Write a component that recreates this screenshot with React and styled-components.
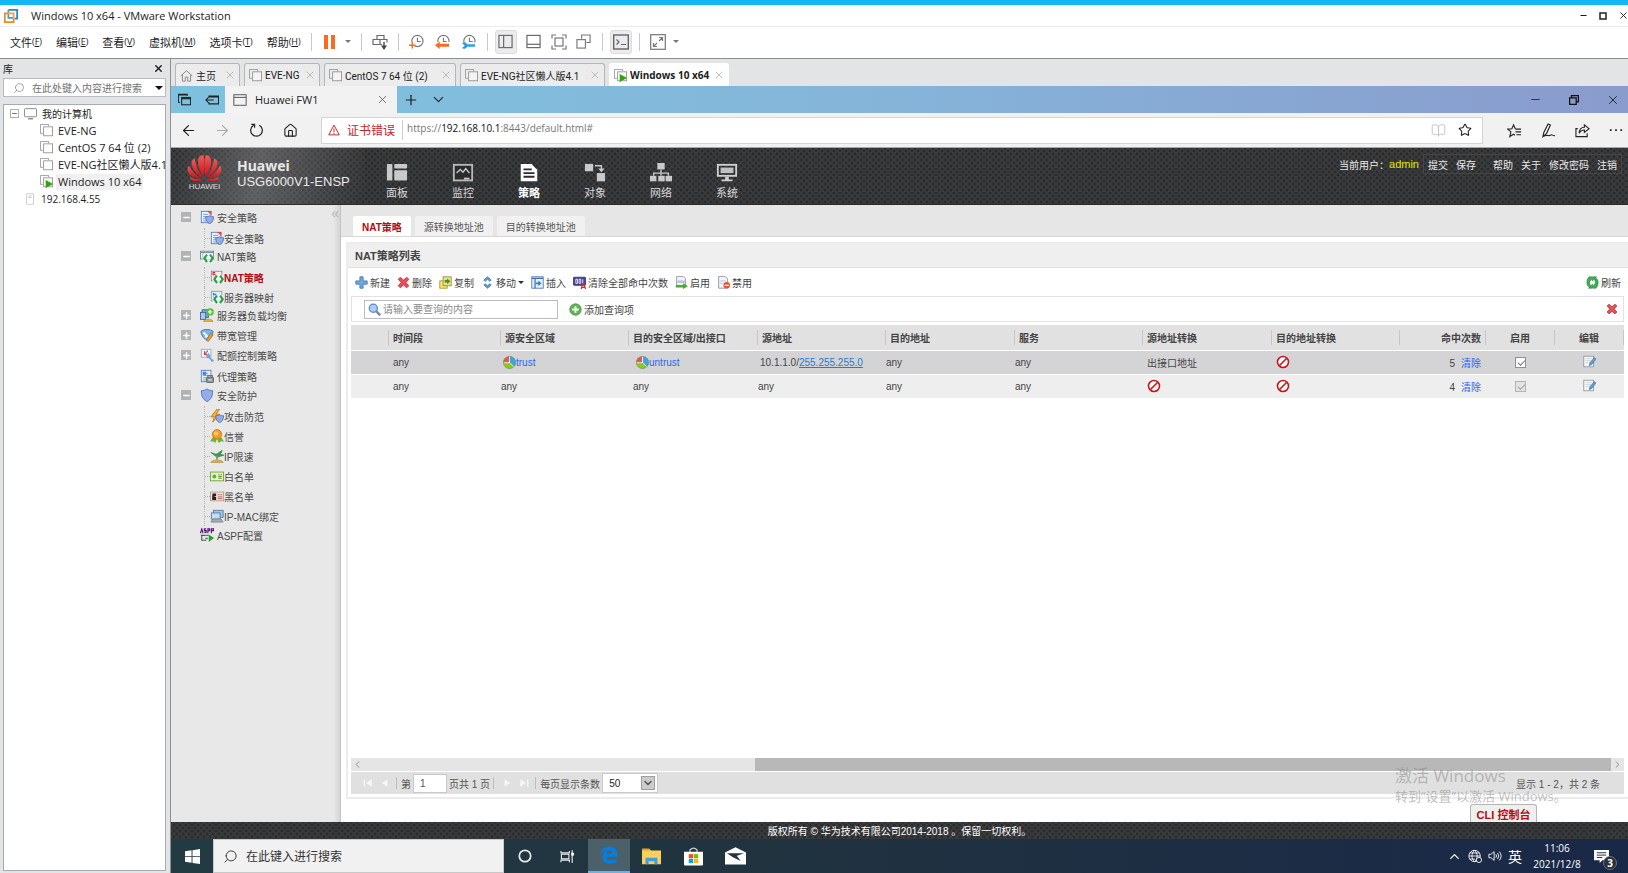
// Main packages
import React from "react";
import styled, { createGlobalStyle, css } from "styled-components";
// Icons
import { ArrowLeft, ArrowRight, BookOpen, ChevronDown, ChevronLeft, ChevronRight, ChevronUp, Home, Minus, Plus, Search, Star, X } from "lucide-react";

const GlobalStyle = createGlobalStyle`
  :root {
    --ui: "Open Sans", "Noto Sans CJK SC", sans-serif;
    --page: "Liberation Sans", "Noto Sans CJK SC", sans-serif;
    --red: #b50a0f;
    --link: #2a66f0;
    --chrome: #e3e4e6;
  }
  * {
    box-sizing: border-box;
  }
  body {
    margin: 0;
    font-family: var(--ui);
    font-size: 10px;
    color: #1c1c1c;
  }
  button, input, select {
    font: inherit;
    color: inherit;
    margin: 0;
  }
  button {
    padding: 0;
    border: 0;
    background: none;
    display: inline-flex;
    align-items: center;
    justify-content: center;
    white-space: nowrap;
  }
  a {
    color: inherit;
    text-decoration: none;
  }
  svg {
    flex: none;
    display: block;
  }
`;

const carbon = css`
  background-color: #3b3c3e;
  background-image: radial-gradient(#2a2b2d 1px, transparent 2px),
    radial-gradient(#2a2b2d 1px, transparent 2px);
  background-size: 6px 6px;
  background-position: 0 0, 3px 3px;
`;

/* Small drawings */

const Icon = ({ size = 13, box = 16, children, ...rest }) => (
  <svg width={size} height={size} viewBox={`0 0 ${box} ${box}`} fill="none" aria-hidden="true" {...rest}>
    {children}
  </svg>
);

const VmwareLogo = () => (
  <Icon size={14}>
    <path d="M5 1h10v10h-3" stroke="#1b8fc4" strokeWidth="2" />
    <path d="M5 1v9h6" stroke="#35a3d6" strokeWidth="2" />
    <path d="M5 5H1v10h10v-4" stroke="#f08a1d" strokeWidth="2" />
    <path d="M4 5h7v6" stroke="#f7a13a" strokeWidth="2" />
  </Icon>
);

const VmIcon = ({ running }) => (
  <Icon size={13}>
    <path d="M3.500 11.500h-3v-11h10v2" stroke="#8b8b8b" />
    <rect x="4.500" y="3.500" width="11" height="11" stroke="#8b8b8b" fill="#fff" fillOpacity=".4" />
    {running && <path d="M7 6l9 5-9 5z" fill="#2fa40f" />}
  </Icon>
);

const MonitorIcon = () => (
  <Icon size={13}>
    <rect x=".6" y="2" width="14.800" height="10" rx="1" stroke="#777" />
    <path d="M5 14.500h6" stroke="#777" strokeWidth="1.500" />
  </Icon>
);

const HostIcon = () => (
  <Icon size={12}>
    <rect x="3.500" y="1" width="9" height="14" stroke="#c4c4c4" />
    <path d="M6 4h4M6 6h4" stroke="#b5b5b5" />
  </Icon>
);

const MiniHome = () => (
  <Icon size={13}>
    <path d="M1 8.500L8 2l7 6.500M3 7.500V15h3.500v-5h3v5H13V7.500" stroke="#8a8a8a" strokeWidth="1.200" />
  </Icon>
);

const Device = () => (
  <Icon size={16}>
    <path d="M5 1.500h7v4H5zM10 10.500H1v-5h14v3M8 5.500v5" stroke="#6a6a6a" strokeWidth="1.200" />
    <path d="M12 8v5" stroke="#555" strokeWidth="1.500" />
    <path d="M9 11.500h6L12 16z" fill="#444" />
  </Icon>
);

const ClockIcon = ({ kind }) => (
  <Icon size={15}>
    <circle cx="9" cy="7.500" r="6" stroke="#777" strokeWidth="1.200" />
    <path d="M9 4v4h3.500" stroke="#777" strokeWidth="1.200" />
    {kind === "add" && (
      <>
        <path d="M0 8.500h5.500V16H0z" fill="#fff" />
        <path d="M0 12h7M3.500 8.500v7" stroke="#ff6a1f" strokeWidth="1.500" />
      </>
    )}
    {kind === "back" && (
      <>
        <path d="M0 8.500h16V16H0z" fill="#fff" />
        <path d="M0 12l5-4v2.500h10v3H5V16z" fill="#ff6a1f" />
      </>
    )}
    {kind === "manage" && (
      <>
        <path d="M0 9h16v7H0z" fill="#fff" />
        <path d="M1 9.500c3-1.500 5 0 5.500 1.500H15v2.500H6.500C5.500 16 2.500 16 1 15l3-2.500z" fill="#2b9fe6" />
      </>
    )}
  </Icon>
);

const PaneIcon = ({ side }) => (
  <Icon size={15}>
    <rect x="1" y="1.500" width="14" height="13" stroke="#6c6c6c" strokeWidth="1.300" />
    {side === "left" ? <path d="M6 2v12" stroke="#6c6c6c" strokeWidth="1.300" /> : <path d="M1 11h14" stroke="#6c6c6c" strokeWidth="1.300" />}
  </Icon>
);

const FullIcon = () => (
  <Icon size={16}>
    <path d="M1 4.500V1h4M11 1h4v3.500M15 11.500V15h-4M5 15H1v-3.500" stroke="#777" strokeWidth="1.200" />
    <rect x="4" y="4" width="8" height="8" stroke="#777" strokeWidth="1.200" />
  </Icon>
);

const UnityIcon = () => (
  <Icon size={15}>
    <path d="M6 5V1h9v8h-4" stroke="#777" strokeWidth="1.200" />
    <rect x="1" y="6" width="9" height="9" stroke="#777" strokeWidth="1.200" />
  </Icon>
);

const ConsoleIcon = () => (
  <Icon size={16}>
    <rect x=".7" y="1" width="14.600" height="14" stroke="#666" strokeWidth="1.400" />
    <path d="M3.500 5.500L6 8l-2.500 2.500M8 10.500h5" stroke="#666" strokeWidth="1.200" />
  </Icon>
);

const StretchIcon = () => (
  <Icon size={16}>
    <rect x=".7" y=".7" width="14.600" height="14.600" stroke="#777" strokeWidth="1.200" />
    <path d="M9 3.500h3.500V7M7 12.500H3.500V9M12.500 3.500L9 7M3.500 12.500L7 9" stroke="#777" strokeWidth="1.200" />
  </Icon>
);

const TabsAside = () => (
  <Icon size={13}>
    <path d="M2.500 11.500h-2v-10h11v2M1 2.500h10" stroke="#222" strokeWidth="1.300" />
    <rect x="4.500" y="5.500" width="11" height="9" stroke="#222" strokeWidth="1.300" />
    <path d="M4.500 7h11" stroke="#222" strokeWidth="1.500" />
  </Icon>
);

const SetAside = () => (
  <Icon size={14}>
    <path d="M4.500 5.500v-2h11v9h-11v-2M4.500 4.500h11" stroke="#222" strokeWidth="1.300" />
    <path d="M10 8H1M4 5L1 8l3 3" stroke="#222" strokeWidth="1.200" />
  </Icon>
);

const PageIcon = () => (
  <Icon size={14}>
    <rect x="1" y="2" width="14" height="12" stroke="#444" />
    <path d="M1 5h14" stroke="#444" />
  </Icon>
);

const Reload = () => (
  <Icon size={15}>
    <path d="M11 2.400a6.200 6.200 0 1 1-6 0" stroke="#222" strokeWidth="1.300" />
    <path d="M2.500 1.500h3.500V5" stroke="#222" strokeWidth="1.200" />
  </Icon>
);

const Warning = () => (
  <Icon size={12}>
    <path d="M8 1.500L15 14.500H1z" stroke="#c5262c" strokeWidth="1.300" />
    <path d="M8 6v5M8 12v1.500" stroke="#c5262c" strokeWidth="1.300" />
  </Icon>
);

const FavList = () => (
  <Icon size={15}>
    <path d="M9 6.500L7 2 5.200 6.200.800 6.500l3.400 3L3 14.500l4-2.500 1.500 1" stroke="#222" strokeWidth="1.200" />
    <path d="M9 6.500h6M9 9.500h6M10 12.500h5" stroke="#222" strokeWidth="1.200" />
  </Icon>
);

const Pen = () => (
  <Icon size={15}>
    <path d="M2 14.500l1-4.500L7.500 1l2.500 1.200L6 11zM2 14.500c5-3 6 0 8-1.500s2 1 5 .5" stroke="#222" strokeWidth="1.200" />
  </Icon>
);

const Share = () => (
  <Icon size={15}>
    <path d="M3 6H1v8.500h12V11" stroke="#222" strokeWidth="1.200" />
    <path d="M10 2l5 4-5 4V7.500C7 7.500 5.500 9 4.500 11c0-4 2-6.500 5.500-6.500z" stroke="#222" strokeWidth="1.200" />
  </Icon>
);

const HuaweiFlower = () => (
  <svg width="35" height="27" viewBox="0 0 70 54" aria-hidden="true">
    <defs>
      <linearGradient id="petal" x1="0" y1="0" x2="0" y2="1">
        <stop offset="0" stopColor="#f25a55" />
        <stop offset="1" stopColor="#c4101c" />
      </linearGradient>
    </defs>
    <g fill="url(#petal)">
      <path d="M33 44C24 30 19 14 24 4c2-3 7-4 9-3 3 12 2 30 0 43z" />
      <path d="M37 44c9-14 14-30 9-40-2-3-7-4-9-3-3 12-2 30 0 43z" />
      <path d="M31 46C20 40 8 26 9 14c1-4 4-6 7-7 1 14 8 29 15 39z" />
      <path d="M39 46c11-6 23-20 22-32-1-4-4-6-7-7-1 14-8 29-15 39z" />
      <path d="M30 48C16 47 2 40 1 30c0-4 1-6 3-9 6 12 15 21 26 27z" />
      <path d="M40 48c14-1 28-8 29-18 0-4-1-6-3-9-6 12-15 21-26 27z" />
      <path d="M29 50C20 55 9 54 5 44c8 4 16 5 24 6z" />
      <path d="M41 50c9 5 20 4 24-6-8 4-16 5-24 6z" />
    </g>
  </svg>
);

const navArt = {
  panel: (
    <g fill="#c9c9c9">
      <rect x="1" y="1" width="6" height="18" rx="1" />
      <rect x="9" y="1" width="14" height="5" rx="1" />
      <rect x="9" y="8" width="14" height="11" rx="1" />
    </g>
  ),
  monitor: (
    <>
      <rect x="2" y="2" width="20" height="17" stroke="#b9b9b9" strokeWidth="2" fill="#2b2b2b" />
      <path d="M5 11l4-4 3 3 3-4 4 5" stroke="#c9c9c9" strokeWidth="1.500" />
      <path d="M13 17h6" stroke="#c9c9c9" strokeWidth="2" />
    </>
  ),
  policy: (
    <>
      <path d="M3 1h13l5 5v14H3z" fill="#fff" />
      <path d="M16 1l5 5" stroke="#333" strokeWidth="2" />
      <path d="M6 7h9M6 11h12M6 15h12" stroke="#2b2b2b" strokeWidth="2" />
    </>
  ),
  object: (
    <>
      <rect x="1" y="1" width="9" height="8" fill="#c9c9c9" />
      <rect x="14" y="11" width="9" height="9" fill="#c9c9c9" />
      <path d="M12 3h7v4" stroke="#c9c9c9" strokeWidth="1.500" />
      <path d="M15.500 6h7L19 10z" fill="#c9c9c9" />
    </>
  ),
  network: (
    <>
      <g fill="#c9c9c9">
        <rect x="8" y="0" width="8" height="7" />
        <rect x="0" y="14" width="7" height="6" />
        <rect x="9" y="14" width="7" height="6" />
        <rect x="17" y="14" width="7" height="6" />
      </g>
      <path d="M12 7v7M4 14v-3h16v3" stroke="#c9c9c9" strokeWidth="1.500" />
    </>
  ),
  system: (
    <>
      <rect x="2" y="2" width="20" height="12" stroke="#d0d0d0" strokeWidth="2" />
      <rect x="5" y="5" width="14" height="6" fill="#c0c0c0" />
      <path d="M10 15h4v3h4v2H6v-2h4z" fill="#d0d0d0" />
    </>
  ),
};

const Sheet = () => (
  <>
    <rect x="1.500" y="1.500" width="11" height="13" fill="#eaf2fb" stroke="#4f7fb8" />
    <path d="M3.500 5h6M3.500 7.500h6M3.500 10h6M3.500 12.500h4" stroke="#6f96c6" />
  </>
);

const Arrows = () => (
  <>
    <path d="M3 6h12v9.500H3z" fill="#fff" fillOpacity=".6" />
    <path d="M8 6.500L5 10.500l3 4.500M11.500 6.500l3 4-3 4.500" stroke="#23a045" strokeWidth="2.400" />
  </>
);

const Shield = ({ big }) => (
  <path
    d={big ? "M8 1c2 1.500 4 2 6.500 2 0 6-1.500 10-6.500 12.500C3 13 1.500 9 1.500 3 4 3 6 2.500 8 1z" : "M11 6.500c1 1 2.500 1.200 4.500 1.200 0 4-1.500 6.500-4.500 8-3-1.500-4.500-4-4.500-8 2 0 3.500-.2 4.500-1.200z"}
    fill="#93adea"
    stroke="#5470b8"
  />
);

const treeArt = {
  policy: (
    <>
      <Sheet />
      <path d="M8 1l5 5V1z" fill="#e0484a" />
      <Shield />
    </>
  ),
  nat: (
    <>
      <rect x=".5" y="2.500" width="15" height="9" fill="#e8f0f6" stroke="#6d8398" />
      <path d="M1 4h14M3.500 5v6" stroke="#6d8398" />
      <Arrows />
    </>
  ),
  natRule: (
    <>
      <rect x="1.500" y="1.500" width="12" height="11" fill="#f7ecec" stroke="#8b8b98" />
      <path d="M6 3H3.500v2.500H6V8H3.500" stroke="#c23" strokeWidth="1.200" />
      <Arrows />
    </>
  ),
  mapping: (
    <>
      <rect x="1.500" y="1.500" width="12" height="11" fill="#e4eef9" stroke="#8b9ab0" />
      <path d="M4 3v6h2.500V5H4" stroke="#2f7fd0" strokeWidth="1.200" />
      <Arrows />
    </>
  ),
  balance: (
    <>
      <rect x="2.500" y="2" width="7" height="9" fill="#7aa7dd" stroke="#36639c" />
      <rect x="0.500" y="5" width="6" height="8" fill="#a9c8ee" stroke="#36639c" />
      <path d="M4 15.500c1-3.500 10-3.500 11 0z" fill="#e4b63b" stroke="#9b7724" strokeWidth=".6" />
      <circle cx="11.500" cy="4.500" r="4.200" fill="#4fbf2c" />
      <path d="M11.500 2v5M9 4.500h5" stroke="#fff" strokeWidth="1.500" />
    </>
  ),
  bandwidth: (
    <>
      <path d="M1 4c2-3 12-3 14 0-1 6-4 9-7 9S2 10 1 4z" fill="#7fb4e8" stroke="#3f6ea8" />
      <path d="M4 5l4 4-2 2" stroke="#fff" strokeWidth="2" />
      <path d="M7 14l5-8 3 2-5.500 7.500z" fill="#e79a34" stroke="#7b5215" strokeWidth=".6" />
    </>
  ),
  quota: (
    <>
      <rect x="1.500" y="1.500" width="11" height="9" fill="#fff" stroke="#9aa3af" />
      <path d="M5 3.500v4h4M5 7.500L9 3" stroke="#d8363a" strokeWidth="1.200" />
      <path d="M9 9l5 5.500M7.500 8.500l2-1.500 1.500 2-2 1.500zM13 15.500l2.500-2" stroke="#6ba0dc" strokeWidth="1.800" />
    </>
  ),
  proxy: (
    <>
      <Sheet />
      <path d="M3 3h4v4H3z" fill="#4a88ce" />
      <path d="M9 10V7.500h5V10" stroke="#6b7378" strokeWidth="1.300" />
      <rect x="7.500" y="9.500" width="8" height="6" rx="1" fill="#8e969c" stroke="#565d62" />
      <path d="M9.500 12.500h4" stroke="#fff" />
    </>
  ),
  shield: <Shield big />,
  attack: (
    <>
      <path d="M8 0L1 9h4l-2 6 8-9H7l4-6z" fill="#f8b52c" stroke="#c1761a" />
      <Shield />
    </>
  ),
  medal: (
    <>
      <path d="M4 8l-4 6.500 3.500-.5L6 16l2-5 2 5 2.500-2 3.500.5L12 8z" fill="#6cb52d" />
      <circle cx="8" cy="6" r="5.300" fill="#f59b25" stroke="#d9731a" />
      <circle cx="7" cy="5" r="2.500" fill="#fbc868" />
    </>
  ),
  limit: (
    <>
      <path d="M1 4l6 2 7-4.500-2 4.500 4 1-8 2.500z" fill="#37a24d" stroke="#1f7434" strokeWidth=".6" />
      <path d="M7 8h2v4H7z" fill="#8a8a8a" />
      <path d="M1 15.500c1-4 13-4 14 0z" fill="#e0b23c" stroke="#9b7724" strokeWidth=".6" />
    </>
  ),
  white: (
    <>
      <rect x=".5" y="3.500" width="15" height="10" fill="#e5f5cd" stroke="#6ca32d" />
      <circle cx="5" cy="8.500" r="2.300" fill="#6cae28" />
      <path d="M9.500 6.500h1.500m1 0h1.500M9.500 8.500h4M9.500 10.500h4" stroke="#4c7a1f" />
    </>
  ),
  black: (
    <>
      <rect x=".5" y="3.500" width="15" height="10" fill="#f2dfd8" stroke="#b29c92" />
      <path d="M3 5h4v3H4l3 1v3.500H2.500V8z" fill="#222" />
      <path d="M9 6.500h2m1 0h2M9 9h5M9 11h5" stroke="#b9524a" />
    </>
  ),
  mac: (
    <>
      <rect x="4" y="1.500" width="11" height="8" fill="#9dc6ef" stroke="#5b7895" />
      <rect x="1.500" y="4.500" width="10" height="7" fill="#c5dcf3" stroke="#5b7895" />
      <path d="M1 15h14l-2-3.500H3z" fill="#a3acb5" stroke="#666e76" strokeWidth=".6" />
    </>
  ),
  aspf: (
    <>
      <path d="M.5 6L2 1l1.500 5M5 5h2V3H5V1h2M9 6V1h2v2H9M13 6V1h2.500v2H13" stroke="#5a1673" strokeWidth="1.300" />
      <path d="M1 8.500h5M2 8.500V14h5" stroke="#555" strokeWidth="1.300" />
      <path d="M6 8.500h4M6 12h3" stroke="#3c9441" strokeWidth="1.500" />
      <path d="M10 7.500l6 4-6 4.500z" fill="#279b2c" />
    </>
  ),
};

const toolArt = {
  add: <path d="M6 1h4v5h5v4h-5v5H6v-5H1V6h5z" fill="#6fa9de" stroke="#3d76b2" />,
  remove: <path d="M4 1.500l4 3.500 4-3.500 2.500 2.500L11 8l3.500 4-2.500 2.500L8 11l-4 3.500L1.500 12 5 8 1.500 4z" fill="#e2525a" stroke="#bd2e36" />,
  copy: (
    <>
      <rect x="1" y="6" width="9" height="9" fill="#fbe76a" stroke="#a88a22" />
      <rect x="5" y="1" width="10" height="11" fill="#f6e07a" stroke="#8a8353" />
      <path d="M7 5h3V3l4 3.500L10 10V8H7z" fill="#2f9a34" />
    </>
  ),
  move: <path d="M8 1l4.500 4-1.500 1.500-3-2.500-3 2.500L3.500 5zM8 15l4.500-4L11 9.500 8 12 5 9.500 3.500 11z" fill="#5f9bd4" stroke="#3d76b2" />,
  insert: (
    <>
      <rect x="1" y="1" width="14" height="14" fill="#e9f2fc" stroke="#3f6ea8" />
      <path d="M1 3h14M5 3v12" stroke="#3f6ea8" strokeWidth="1.500" />
      <path d="M6 8h3V5.500L13 9l-4 3.500V10H6z" fill="#3d7fc4" />
    </>
  ),
  clear: (
    <>
      <rect x=".5" y="1.500" width="15" height="10" rx="1" fill="#4a4596" stroke="#332e70" />
      <path d="M3.500 4h2v5h-2zM7.500 4h2v5h-2zM12 4v5" stroke="#fff" />
      <path d="M10 16l2-6h1.500l2 6M11 14h3.500" stroke="#e0252b" strokeWidth="1.500" />
    </>
  ),
  enable: (
    <>
      <path d="M2 .5h8l3 3V13H2z" fill="#f3f3f7" stroke="#888a99" />
      <path d="M3 7h9" stroke="#b8c4d8" strokeWidth="3" />
      <path d="M1 11h9V8.500l6 4-6 3.500v-2H1z" fill="#4cab2a" />
    </>
  ),
  disable: (
    <>
      <path d="M2 .5h8l3 3V15H2z" fill="#f3f3f7" stroke="#888a99" />
      <path d="M4 6h7M4 9h4" stroke="#b8c4d8" />
      <circle cx="12" cy="11.500" r="4" fill="#e5533d" />
      <path d="M9.500 11.500h5" stroke="#fff" strokeWidth="1.500" />
    </>
  ),
  refresh: (
    <>
      <path d="M7 1H4Q1 3 1 8q0 4 3 6l-1 1h5v-5L6 12Q4 10 4.500 7L7 4z" fill="#3fae55" stroke="#227a37" strokeWidth=".7" />
      <path d="M9 15h3q3-2 3-7 0-4-3-6l1-1H8v5l2-2q2 2 1.500 5L9 12z" fill="#3fae55" stroke="#227a37" strokeWidth=".7" />
    </>
  ),
  find: (
    <>
      <path d="M10 10l5 5" stroke="#7a8aa6" strokeWidth="3" />
      <circle cx="6.500" cy="6.500" r="5" fill="#a9cdf5" stroke="#5a85c4" strokeWidth="1.500" />
    </>
  ),
  plus: (
    <>
      <circle cx="8" cy="8" r="7" fill="#63b457" stroke="#3f8f35" />
      <path d="M8 4v8M4 8h8" stroke="#fff" strokeWidth="2.200" />
    </>
  ),
  zone: (
    <>
      <circle cx="8" cy="8" r="7.500" fill="#8cc81e" />
      <path d="M8 8V.5A7.500 7.500 0 0 0 .5 8z" fill="#f0544f" />
      <path d="M8 8V.5a7.500 7.500 0 0 1 5.300 12.800z" fill="#3aa7e2" />
      <path d="M8 .5V8M.5 8.500L8 8l5.500 5.500" stroke="#fff" />
      <circle cx="8" cy="8" r="7.500" stroke="#6e8a5b" strokeWidth=".8" />
    </>
  ),
  none: (
    <>
      <circle cx="8" cy="8" r="6.300" stroke="#cc1417" strokeWidth="1.800" fill="#fff" />
      <path d="M4 12l8-8" stroke="#cc1417" strokeWidth="1.800" />
    </>
  ),
  edit: (
    <>
      <rect x="1" y="1.500" width="12" height="13" fill="#fafafa" stroke="#888e98" />
      <path d="M3 4.500h8M3 7h7M3 9.500h4" stroke="#c2c8d2" />
      <path d="M7.500 13l1-3.500L14 3l2 2-5.500 7z" fill="#5f9bd4" stroke="#3b6ca3" strokeWidth=".7" />
    </>
  ),
};

/* Host window */

const Screen = styled.div`
  position: relative;
  min-height: 100vh;
  display: flex;
  flex-direction: column;
  background: var(--chrome);
  border-top: 5px solid #12b7f5;
`;

const TitleBar = styled.header`
  display: flex;
  align-items: center;
  gap: 13px;
  height: 22px;
  padding-left: 4px;
  background: #fff;
  border-bottom: 1px solid #ececec;
  font-size: 11px;
`;

const WindowControls = styled.div`
  display: flex;
  gap: ${(p) => p.$gap}px;
  margin-left: auto;
  button {
    width: ${(p) => p.$size}px;
  }
`;

const MenuBar = styled.nav`
  display: flex;
  align-items: center;
  height: 32px;
  padding: 0 10px 2px;
  background: #fff;
  border-bottom: 1px solid #8e8e8e;
`;

const Menus = styled.div`
  display: flex;
  gap: 14px;
  font-size: 11px;
  small {
    font-size: 9px;
  }
`;

const Divider = styled.span`
  width: 1px;
  height: 18px;
  margin: 0 ${(p) => p.$after || 10}px 0 ${(p) => p.$before || 10}px;
  background: #c9c9c9;
`;

const ToolRow = styled.div`
  display: flex;
  align-items: center;
  gap: ${(p) => p.$gap}px;
`;

const ToolButton = styled.button`
  width: ${(p) => (p.$pressed ? 22 : 16)}px;
  height: 24px;
  border-radius: 3px;
  ${(p) =>
    p.$pressed &&
    css`
      background: #ececee;
      border: 1px solid #dcdcdf;
    `}
`;

const Pause = styled.span`
  width: 11px;
  height: 14px;
  border: solid #f96a22;
  border-width: 0 4px;
`;

const Caret = styled.span`
  border: ${(p) => p.$size || 3}px solid transparent;
  border-top-color: ${(p) => p.$color || "#777"};
  border-bottom-width: 0;
`;

const Workspace = styled.div`
  flex: 1;
  display: flex;
`;

/* Library */

const Library = styled.aside`
  flex: none;
  width: 171px;
  display: flex;
  flex-direction: column;
  padding: 0 4px 2px 3px;
  border-right: 1px solid #8d8f93;
`;

const LibraryHead = styled.div`
  display: flex;
  align-items: center;
  justify-content: space-between;
  height: 19px;
  padding-right: 2px;
`;

const LibrarySearch = styled.label`
  display: flex;
  align-items: center;
  height: 19px;
  margin-bottom: 7px;
  padding: 0 2px 0 9px;
  background: #fff;
  border: 1px solid #b9bcc2;
  input {
    flex: 1;
    min-width: 0;
    margin-left: 7px;
    padding: 0;
    border: 0;
    outline: 0;
    background: none;
  }
  input::placeholder {
    color: #707070;
  }
`;

const Tree = styled.ul`
  flex: 1;
  margin: 0;
  padding: 0;
  list-style: none;
  background: #fff;
  border: 1px solid #a6aab5;
`;

const TreeRow = styled.li`
  display: flex;
  align-items: center;
  height: 17px;
  padding-left: ${(p) => p.$indent}px;
  gap: 3px;
  white-space: nowrap;
  font-size: ${(p) => (p.$guest ? 11 : 10)}px;
  span {
    padding: 0 2px;
    line-height: 16px;
    background: ${(p) => (p.$selected ? "#f0f0f0" : "none")};
  }
`;

const Fold = styled.button`
  width: 9px;
  height: 9px;
  margin-right: 2px;
  border: 1px solid #b0b0b0;
  color: #3d62c4;
`;

/* Guest tabs */

const Guest = styled.main`
  flex: 1;
  min-width: 0;
  display: flex;
  flex-direction: column;
`;

const GuestTabs = styled.div`
  display: flex;
  gap: 4px;
  padding: 4px 4px 0;
`;

const GuestTab = styled.div`
  display: flex;
  align-items: center;
  height: 23px;
  padding: 0 3px 0 4px;
  gap: 3px;
  width: ${(p) => p.$width}px;
  background: ${(p) => (p.$active ? "#fff" : "#ececed")};
  border: 1px solid ${(p) => (p.$active ? "#fff" : "#b5b6b9")};
  border-bottom: 0;
  border-radius: 3px 3px 0 0;
  font-family: ${(p) => (p.$active ? "var(--ui)" : 'Roboto, "Noto Sans CJK SC", sans-serif')};
  font-weight: ${(p) => (p.$active ? 700 : 400)};
  white-space: nowrap;
  button:last-child {
    margin-left: auto;
  }
`;

/* Browser */

const BrowserTabs = styled.div`
  display: flex;
  height: 27px;
  background: linear-gradient(90deg, #7ec2df, #85b6da 45%, #8a9bcd);
`;

const StripButton = styled.button`
  width: ${(p) => p.$width || 27}px;
  height: 27px;
`;

const BrowserTab = styled.div`
  display: flex;
  align-items: center;
  gap: 8px;
  width: 172px;
  padding: 0 8px;
  background: #f2f2f2;
  font-size: 11px;
  button {
    margin-left: auto;
  }
`;

const AddressBar = styled.div`
  display: flex;
  align-items: center;
  height: 35px;
  background: #f1f1f1;
  border-bottom: 1px solid #a9a9a9;
`;

const NavButton = styled.button`
  width: ${(p) => p.$width}px;
  height: 28px;
`;

const AddressField = styled.div`
  flex: 1;
  display: flex;
  align-items: center;
  height: 27px;
  margin: 0 19px 0 14px;
  padding: 0 5px 0 6px;
  background: #fff;
  border: 1px solid #d5d5d5;
  color: #777;
`;

const CertError = styled.span`
  display: flex;
  align-items: center;
  gap: 7px;
  height: 20px;
  padding-right: 7px;
  margin-right: 4px;
  border-right: 1px solid #ccc;
  color: #c5262c;
  font-size: 12px;
`;

const Url = styled.a`
  flex: 1;
  padding-bottom: 4px;
  b {
    font-weight: 400;
    color: #111;
  }
`;

/* Firewall page */

const Site = styled.div`
  flex: 1;
  display: flex;
  flex-direction: column;
  font-family: var(--page);
  color: #444;
`;

const SiteHeader = styled.header`
  ${carbon}
  display: flex;
  height: 57px;
  border-bottom: 1px solid #2b2b2b;
  color: #ddd;
`;

const Brand = styled.div`
  display: flex;
  width: 193px;
  padding: 7px 0 0 16px;
  gap: 15px;
  background: linear-gradient(100deg, transparent, rgba(160, 160, 160, 0.4) 45%, transparent);
`;

const LogoBox = styled.div`
  display: flex;
  flex-direction: column;
  align-items: center;
  width: 35px;
  font-size: 8px;
  line-height: 10px;
`;

const BrandName = styled.div`
  font-size: 13px;
  line-height: 16px;
  color: #e8e8e8;
  padding-top: 3px;
  strong {
    display: block;
    font-family: "Noto Sans", sans-serif;
    font-size: 14px;
  }
`;

const SiteNav = styled.nav`
  display: flex;
`;

const SiteNavItem = styled.a`
  display: flex;
  flex-direction: column;
  align-items: center;
  width: 66px;
  padding-top: 15px;
  gap: 1px;
  font-size: 11px;
  line-height: 15px;
  font-weight: ${(p) => (p.$active ? 700 : 400)};
  color: ${(p) => (p.$active ? "#fff" : "#d8d8d8")};
`;

const UserBar = styled.div`
  display: flex;
  align-items: center;
  height: 20px;
  margin: 6px 6px 0 auto;
  color: #e8e8e8;
  em {
    font-style: normal;
    color: #e6e600;
    font-size: 11px;
    margin-right: 4px;
  }
`;

const UserLinks = styled.div`
  display: flex;
  align-items: center;
  gap: 8px;
  height: 20px;
  padding: 0 4px;
  border: 1px solid #454648;
  a:nth-child(3) {
    margin-left: 9px;
  }
`;

const SiteBody = styled.div`
  flex: 1;
  display: flex;
`;

const SideNav = styled.aside`
  flex: none;
  display: flex;
  justify-content: space-between;
  width: 170px;
  padding: 2px 1px 0 10px;
  background: linear-gradient(90deg, #e8e8e8 96%, #d4d4d4);
  border-right: 1px solid #c4c4c4;
`;

const SideList = styled.ul`
  margin: 0;
  padding: 0;
  list-style: none;
  white-space: nowrap;
`;

const SideLink = styled.a`
  display: flex;
  align-items: center;
  height: 20px;
  padding-top: ${(p) => (p.$leaf ? 2 : 0)}px;
  gap: ${(p) => (p.$child ? 0 : 3)}px;
  color: ${(p) => (p.$active ? "var(--red)" : "#4a4a4a")};
  font-weight: ${(p) => (p.$active ? 700 : 400)};
`;

const FoldBox = styled.span`
  display: flex;
  align-items: center;
  justify-content: center;
  width: 10px;
  height: 10px;
  margin-right: 6px;
  color: #fff;
  background: ${(p) => (p.$empty ? "none" : "#b2b3b5")};
`;

const SubList = styled(SideList)`
  margin: 0 0 -2px 23px;
  padding-top: 1px;
  li {
    display: flex;
    border-left: 1px dotted #b5b5b5;
  }
  li::before {
    content: "";
    width: 5px;
    height: 10px;
    border-bottom: 1px dotted #b5b5b5;
  }
`;

const Collapse = styled.button`
  align-self: flex-start;
  height: 12px;
  color: #b5b5b5;
  font-size: 14px;
`;

const Content = styled.section`
  flex: 1;
  min-width: 0;
  display: flex;
  flex-direction: column;
  background: #fff;
`;

const PageTabs = styled.div`
  display: flex;
  align-items: flex-end;
  gap: 4px;
  height: 32px;
  padding-left: 12px;
  background: #e6e6e6;
  border-bottom: 1px solid #d6d6d6;
`;

const PageTab = styled.button`
  height: 20px;
  padding: 0 9px;
  border-radius: 2px 2px 0 0;
  background: ${(p) => (p.$active ? "#fff" : "#f1f1f1")};
  color: ${(p) => (p.$active ? "var(--red)" : "#555")};
  font-weight: ${(p) => (p.$active ? 700 : 400)};
`;

const Panel = styled.div`
  flex: 1;
  display: flex;
  flex-direction: column;
  margin: 5px 0 0 5px;
  border: 2px solid #ececec;
  border-right: 0;
`;

const PanelTitle = styled.h2`
  margin: 0;
  height: 24px;
  padding-left: 7px;
  background: #efefef;
  border-bottom: 1px solid #e0e0e0;
  font-size: 11px;
  line-height: 24px;
`;

const PanelBody = styled.div`
  flex: 1;
  display: flex;
  flex-direction: column;
  padding: 0 4px 3px 3px;
`;

const Actions = styled.div`
  display: flex;
  align-items: center;
  gap: 7px;
  height: 28px;
  padding: 0 3px 0 4px;
`;

const Action = styled.button`
  gap: 2px;
  &:last-child {
    margin-left: auto;
  }
`;

const FilterRow = styled.div`
  display: flex;
  align-items: center;
  gap: 11px;
  height: 26px;
  margin-bottom: 3px;
  padding: 0 5px 0 12px;
  border: 1px solid #e2e2e2;
  > button:last-child {
    margin-left: auto;
  }
`;

const Query = styled.label`
  display: flex;
  align-items: center;
  gap: 2px;
  width: 194px;
  height: 19px;
  padding: 0 3px;
  border: 1px solid #bbbcc2;
  input {
    flex: 1;
    min-width: 0;
    padding: 0;
    border: 0;
    outline: 0;
  }
  input::placeholder {
    color: #888;
  }
`;

const Table = styled.table`
  width: 100%;
  table-layout: fixed;
  border-collapse: collapse;
  white-space: nowrap;
`;

const HeadCell = styled.th`
  height: 25px;
  padding: 0 5px 0 4px;
  text-align: ${(p) => p.$align || "left"};
  background: linear-gradient(#c6c6c6, #c6c6c6) no-repeat right center / 1px 15px #e1e1e1;
`;

const Row = styled.tr`
  background: ${(p) => (p.$selected ? "#d4d4d6" : "#eee")};
  border-top: 1px solid #fff;
`;

const Cell = styled.td`
  height: 24px;
  padding: 0 ${(p) => (p.$align === "right" ? 5 : 0)}px 0 ${(p) => p.$pad || 0}px;
  text-align: ${(p) => p.$align || "left"};
  > svg, button svg, input {
    display: inline-block;
    vertical-align: middle;
  }
`;

const ZoneLink = styled.a`
  display: flex;
  align-items: center;
  color: var(--link);
`;

const MaskLink = styled.a`
  color: #2a78d0;
  text-decoration: underline;
`;

const ClearLink = styled.a`
  margin-left: 6px;
  color: var(--link);
`;

const Tick = styled.input`
  appearance: none;
  position: relative;
  width: 11px;
  height: 11px;
  border: 1px solid #8f8f8f;
  background: ${(p) => (p.disabled ? "#ddd" : "#fff")};
  opacity: ${(p) => (p.disabled ? 0.6 : 1)};
  &::after {
    content: "";
    position: absolute;
    left: 2px;
    top: 2px;
    width: 6px;
    height: 3px;
    border: solid #777;
    border-width: 0 0 1px 1px;
    transform: rotate(-45deg);
  }
`;

const ScrollTrack = styled.div`
  display: flex;
  align-items: center;
  height: 13px;
  margin-top: auto;
  background: #e5e5e5;
  color: #888;
  button {
    width: 13px;
  }
`;

const ScrollSpace = styled.div`
  flex: 391;
`;

const ScrollThumb = styled.div`
  flex: 855;
  height: 13px;
  background: #b8b8b8;
`;

const Pager = styled.div`
  display: flex;
  align-items: center;
  height: 22px;
  margin-top: 1px;
  padding: 0 24px 0 8px;
  background: #e0e0e0;
  color: #555;
`;

const PageButton = styled.button`
  width: 17px;
  height: 20px;
  color: #f6f6f6;
`;

const PageInput = styled.input`
  width: 34px;
  height: 19px;
  margin: 0 2px;
  padding: 0 6px;
  border: 1px solid #c9c9c9;
  background: #fff;
`;

const PagerRule = styled.span`
  width: 1px;
  height: 12px;
  margin: 0 4px 0 3px;
  background: #bdbdbd;
`;

const SizePicker = styled.span`
  display: flex;
  align-items: center;
  height: 20px;
  width: 56px;
  margin-left: 2px;
  padding-right: 2px;
  background: #fff;
  border: 1px solid #c9c9c9;
  select {
    flex: 1;
    min-width: 0;
    padding: 0 6px;
    appearance: none;
    border: 0;
    background: none;
    color: #222;
  }
  svg {
    width: 14px;
    height: 14px;
    background: #ccc;
    border: 1px solid #9f9f9f;
  }
`;

const Summary = styled.span`
  margin-left: auto;
`;

const ConsoleRow = styled.div`
  display: flex;
  justify-content: flex-end;
  height: 23px;
  padding: 5px 91px 0 0;
`;

const ConsoleTab = styled.button`
  width: 67px;
  border: 1px solid #b5b5b5;
  border-bottom: 0;
  border-radius: 3px 3px 0 0;
  background: #efefef;
  color: var(--red);
  font-size: 11px;
  font-weight: 700;
`;

const SiteFooter = styled.footer`
  ${carbon}
  height: 17px;
  color: #fff;
  line-height: 20px;
  text-align: center;
`;

/* Guest taskbar */

const Taskbar = styled.div`
  display: flex;
  align-items: center;
  height: 34px;
  background: linear-gradient(90deg, #223b42, #20333f 40%, #1a2848);
  color: #fff;
`;

const TaskButton = styled.button`
  width: 42px;
  height: 34px;
  background: ${(p) => (p.$active ? "#4b6068" : "none")};
  border-bottom: ${(p) => (p.$active ? "2px solid #6cb2ea" : "0")};
`;

const TaskSearch = styled.label`
  display: flex;
  align-items: center;
  gap: 8px;
  width: 291px;
  height: 34px;
  padding: 0 9px;
  background: #f1f1f1;
  border: 1px solid #c8c8c8;
  color: #333;
  font-size: 12px;
  input {
    flex: 1;
    min-width: 0;
    border: 0;
    padding: 0;
    outline: 0;
    background: none;
  }
  input::placeholder {
    color: #333;
  }
`;

const Tray = styled.div`
  display: flex;
  align-items: center;
  gap: 6px;
  margin-left: auto;
  padding-right: 12px;
  font-size: 14px;
`;

const Clock = styled.div`
  width: 58px;
  margin-right: 2px;
  font-size: 10px;
  line-height: 16px;
  text-align: center;
`;

const Notice = styled.button`
  position: relative;
  width: 22px;
  height: 20px;
  justify-content: flex-start;
  span {
    position: absolute;
    right: -1px;
    bottom: -4px;
    width: 14px;
    height: 14px;
    border: 1px solid #667080;
    border-radius: 50%;
    background: #2b303a;
    line-height: 12px;
    font-size: 10px;
    font-weight: 700;
  }
`;

const Watermark = styled.div`
  position: absolute;
  right: 66px;
  bottom: 67px;
  width: 167px;
  color: rgba(140, 140, 140, 0.55);
  font-size: 13px;
  line-height: 20px;
  white-space: nowrap;
  pointer-events: none;
  strong {
    display: block;
    font-size: 17px;
    font-weight: 400;
  }
`;

/* Data */

const menus = [
  ["文件", "F"],
  ["编辑", "E"],
  ["查看", "V"],
  ["虚拟机", "M"],
  ["选项卡", "T"],
  ["帮助", "H"],
];

const guestTabs = [
  { label: "主页", width: 65, home: true },
  { label: "EVE-NG", width: 76 },
  { label: "CentOS 7 64 位 (2)", width: 132 },
  { label: "EVE-NG社区懒人版4.1", width: 145 },
  { label: "Windows 10 x64", width: 120, active: true },
];

const siteNav = [
  ["panel", "面板"],
  ["monitor", "监控"],
  ["policy", "策略"],
  ["object", "对象"],
  ["network", "网络"],
  ["system", "系统"],
];

const sideNav = [
  { label: "安全策略", art: "policy", open: true, items: [["policy", "安全策略"]] },
  { label: "NAT策略", art: "nat", open: true, items: [["natRule", "NAT策略", true], ["mapping", "服务器映射"]] },
  { label: "服务器负载均衡", art: "balance" },
  { label: "带宽管理", art: "bandwidth" },
  { label: "配额控制策略", art: "quota" },
  { label: "代理策略", art: "proxy", leaf: true },
  {
    label: "安全防护",
    art: "shield",
    open: true,
    items: [
      ["attack", "攻击防范"],
      ["medal", "信誉"],
      ["limit", "IP限速"],
      ["white", "白名单"],
      ["black", "黑名单"],
      ["mac", "IP-MAC绑定"],
    ],
  },
  { label: "ASPF配置", art: "aspf", leaf: true },
];

const actions = [
  ["add", "新建"],
  ["remove", "删除"],
  ["copy", "复制"],
  ["move", "移动"],
  ["insert", "插入"],
  ["clear", "清除全部命中次数"],
  ["enable", "启用"],
  ["disable", "禁用"],
  ["refresh", "刷新"],
];

const columns = [
  ["", 38],
  ["时间段", 112],
  ["源安全区域", 128],
  ["目的安全区域/出接口", 129],
  ["源地址", 128],
  ["目的地址", 129],
  ["服务", 128],
  ["源地址转换", 129],
  ["目的地址转换", 128],
  ["命中次数", 86, "right"],
  ["启用", 69, "center"],
  ["编辑", 69, "center"],
];

function LibraryPane() {
  return (
    <Library>
      <LibraryHead>
        库
        <button aria-label="关闭">
          <X size={11} strokeWidth={3} />
        </button>
      </LibraryHead>
      <LibrarySearch>
        <Search size={12} strokeWidth={1.5} color="#888" transform="scale(-1 1)" />
        <input aria-label="搜索" placeholder="在此处键入内容进行搜索" />
        <Caret $size={4} $color="#111" />
      </LibrarySearch>
      <Tree>
        <TreeRow $indent={6}>
          <Fold aria-label="折叠">
            <Minus size={7} strokeWidth={3} />
          </Fold>
          <MonitorIcon />
          <span>我的计算机</span>
        </TreeRow>
        {guestTabs.slice(1).map((vm) => (
          <TreeRow key={vm.label} $guest $indent={36} $selected={vm.active}>
            <VmIcon running={vm.active} />
            <span>{vm.label}</span>
          </TreeRow>
        ))}
        <TreeRow $indent={20}>
          <HostIcon />
          <span>192.168.4.55</span>
        </TreeRow>
      </Tree>
    </Library>
  );
}

function Sidebar() {
  return (
    <SideNav>
      <SideList>
        {sideNav.map((group) => (
          <li key={group.label}>
            <SideLink href="#" $leaf={group.leaf}>
              <FoldBox $empty={group.leaf}>
                {!group.leaf && (group.open ? <Minus size={9} strokeWidth={4} /> : <Plus size={9} strokeWidth={4} />)}
              </FoldBox>
              <Icon size={14}>{treeArt[group.art]}</Icon>
              {group.label}
            </SideLink>
            {group.items && (
              <SubList>
                {group.items.map(([art, label, active]) => (
                  <li key={label}>
                    <SideLink href="#" $child $active={active}>
                      <Icon size={14}>{treeArt[art]}</Icon>
                      {label}
                    </SideLink>
                  </li>
                ))}
              </SubList>
            )}
          </li>
        ))}
      </SideList>
      <Collapse aria-label="收起">«</Collapse>
    </SideNav>
  );
}

function PolicyRow({ selected, source, zones, translated, hits }) {
  return (
    <Row $selected={selected}>
      <Cell />
      <Cell $pad={4}>any</Cell>
      {zones.map((zone, i) => (
        <Cell key={i} $pad={zone === "any" ? i * 4 : 2 + i * 5}>
          {zone === "any" ? (
            zone
          ) : (
            <ZoneLink href="#">
              <Icon size={13}>{toolArt.zone}</Icon>
              {zone}
            </ZoneLink>
          )}
        </Cell>
      ))}
      <Cell $pad={selected ? 2 : 0}>{source}</Cell>
      <Cell>any</Cell>
      <Cell>any</Cell>
      <Cell $pad={4}>{translated || <Icon size={14}>{toolArt.none}</Icon>}</Cell>
      <Cell $pad={4}>
        <Icon size={14}>{toolArt.none}</Icon>
      </Cell>
      <Cell $align="right">
        {hits}
        <ClearLink href="#">清除</ClearLink>
      </Cell>
      <Cell $align="center">
        <Tick type="checkbox" aria-label="启用" defaultChecked disabled={!selected} />
      </Cell>
      <Cell $align="center">
        <button aria-label="编辑">
          <Icon size={13}>{toolArt.edit}</Icon>
        </button>
      </Cell>
    </Row>
  );
}

function PolicyPanel() {
  return (
    <Panel>
      <PanelTitle>NAT策略列表</PanelTitle>
      <PanelBody>
        <Actions>
          {actions.map(([art, label]) => (
            <Action key={art}>
              <Icon size={13}>{toolArt[art]}</Icon>
              {label}
              {art === "move" && <Caret $color="#333" />}
            </Action>
          ))}
        </Actions>
        <FilterRow>
          <Query>
            <Icon size={13}>{toolArt.find}</Icon>
            <input aria-label="查询" placeholder="请输入要查询的内容" />
          </Query>
          <Action>
            <Icon size={13}>{toolArt.plus}</Icon>
            添加查询项
          </Action>
          <button aria-label="关闭查询">
            <Icon size={12}>{toolArt.remove}</Icon>
          </button>
        </FilterRow>
        <Table>
          <colgroup>
            {columns.map(([label, width]) => (
              <col key={label} width={width} />
            ))}
          </colgroup>
          <thead>
            <tr>
              {columns.map(([label, , align]) => (
                <HeadCell key={label} $align={align}>
                  {label}
                </HeadCell>
              ))}
            </tr>
          </thead>
          <tbody>
            <PolicyRow
              selected
              zones={["trust", "untrust"]}
              source={
                <>
                  10.1.1.0/<MaskLink href="#">255.255.255.0</MaskLink>
                </>
              }
              translated="出接口地址"
              hits={5}
            />
            <PolicyRow zones={["any", "any"]} source="any" hits={4} />
          </tbody>
        </Table>
        <ScrollTrack>
          <button aria-label="向左滚动">
            <ChevronLeft size={11} />
          </button>
          <ScrollSpace />
          <ScrollThumb />
          <button aria-label="向右滚动">
            <ChevronRight size={11} />
          </button>
        </ScrollTrack>
        <Pager>
          <PageButton aria-label="首页">
            <Icon size={10}>
              <path d="M1 2h2v12H1zM14 2v12L5 8z" fill="currentColor" />
            </Icon>
          </PageButton>
          <PageButton aria-label="上一页">
            <Icon size={10}>
              <path d="M12 2v12L3 8z" fill="currentColor" />
            </Icon>
          </PageButton>
          <PagerRule />
          <label htmlFor="page">第</label>
          <PageInput id="page" defaultValue="1" />
          页共 1 页
          <PagerRule />
          <PageButton aria-label="下一页">
            <Icon size={10}>
              <path d="M4 2v12l9-6z" fill="currentColor" />
            </Icon>
          </PageButton>
          <PageButton aria-label="末页">
            <Icon size={10}>
              <path d="M13 2h2v12h-2zM2 2v12l9-6z" fill="currentColor" />
            </Icon>
          </PageButton>
          <PagerRule />
          <label htmlFor="size">每页显示条数</label>
          <SizePicker>
            <select id="size" defaultValue="50">
              <option>50</option>
            </select>
            <ChevronDown strokeWidth={3} />
          </SizePicker>
          <Summary>显示 1 - 2，共 2 条</Summary>
        </Pager>
      </PanelBody>
    </Panel>
  );
}

function GuestTaskbar() {
  return (
    <Taskbar>
      <TaskButton aria-label="开始">
        <Icon size={15}>
          <path d="M0 2.300L7 1.300V7.600H0zM8 1.200L16 0v7.600H8zM0 8.400h7v6.300l-7-1zM8 8.400h8V16l-8-1.200z" fill="#fff" />
        </Icon>
      </TaskButton>
      <TaskSearch>
        <Search size={15} strokeWidth={1.5} transform="scale(-1 1)" />
        <input aria-label="搜索" placeholder="在此键入进行搜索" />
      </TaskSearch>
      <TaskButton aria-label="Cortana">
        <Icon size={14}>
          <circle cx="8" cy="8" r="6.500" stroke="#e8e8e8" strokeWidth="2" />
        </Icon>
      </TaskButton>
      <TaskButton aria-label="任务视图">
        <Icon size={15}>
          <path d="M1 2v2h9V2M1 14v-2h9v2M1.500 5.500h8v5h-8zM13 1v14" stroke="#e8e8e8" strokeWidth="1.200" />
          <path d="M12 4h3v3h-3z" fill="#fff" />
        </Icon>
      </TaskButton>
      <TaskButton $active aria-label="Edge">
        <Icon size={18}>
          <path
            d="M.5 7C1.300 3 4.300.5 8.200.5c4.600 0 7.300 3 7.300 7v2H5.500c.3 2 2 3 4.500 3 2 0 3.500-.5 4.700-1.200v3.200c-1.200.8-3 1.300-5.200 1.300-4.500 0-7.500-2.500-7.500-6.300C2 7 3.500 5 6 4 3.500 4.200 1.700 5.300.5 7zm5-.3h5.300C10.700 5 9.700 4 8.200 4S5.700 5 5.500 6.700z"
            fill="#0a7ddb"
          />
        </Icon>
      </TaskButton>
      <TaskButton aria-label="文件资源管理器">
        <Icon size={19}>
          <path d="M0 1.500h6l1.500 1.500H16v11.500H0z" fill="#fbcf5b" />
          <path d="M0 1.500h6l1.500 1.500H0z" fill="#e8a21a" />
          <path d="M3 14.500V9h10v5.500h-2.500V12h-5v2.500z" fill="#3f9de0" />
        </Icon>
      </TaskButton>
      <TaskButton aria-label="应用商店">
        <Icon size={19}>
          <path d="M5 5V2.500Q8-.5 11 2.500V5" stroke="#ccc" />
          <path d="M0 4h16v10.500q0 1-1 1H1q-1 0-1-1z" fill="#fff" />
          <path d="M4 6h3.700v3.500H4z" fill="#f25022" />
          <path d="M8.300 6H12v3.500H8.300z" fill="#7fba00" />
          <path d="M4 10h3.700v3.500H4z" fill="#00a4ef" />
          <path d="M8.300 10H12v3.500H8.300z" fill="#ffb900" />
        </Icon>
      </TaskButton>
      <TaskButton aria-label="邮件">
        <Icon size={21}>
          <path d="M0 5l8-4 8 4v9H0z" fill="#fff" />
          <path d="M1.500 5.500h13L6 8.500zM6 8.500l6 3-3-4z" fill="#20333f" />
        </Icon>
      </TaskButton>
      <Tray>
        <ChevronUp size={15} />
        <Icon size={14}>
          <circle cx="7.500" cy="8" r="6.500" stroke="#fff" />
          <path d="M1 8h13M7.500 1.500c-4 4-4 9 0 13M7.500 1.500c4 4 4 9 0 13M2 4.500h11M2 11.500h6" stroke="#fff" />
          <circle cx="12.500" cy="12.500" r="3" fill="#1c2c45" stroke="#fff" />
        </Icon>
        <Icon size={14}>
          <path d="M1 6h2.500L7 3v10l-3.500-3H1z" stroke="#fff" />
          <path d="M9 6q1.500 2 0 4M11 4.500q2.500 3.500 0 7M13 3q4 5 0 10" stroke="#fff" />
        </Icon>
        英
        <Clock>
          11:06
          <br />
          2021/12/8
        </Clock>
        <Notice aria-label="通知">
          <Icon size={15}>
            <path d="M0 1h16v11H9l-3 3v-3H0z" fill="#fff" />
            <path d="M3 4h10M3 6.500h10M3 9h6" stroke="#1b2946" />
          </Icon>
          <span>3</span>
        </Notice>
      </Tray>
    </Taskbar>
  );
}

export default function App() {
  return (
    <Screen>
      <GlobalStyle />
      <TitleBar>
        <VmwareLogo />
        Windows 10 x64 - VMware Workstation
        <WindowControls $gap={10} $size={10}>
          <button aria-label="最小化">
            <Minus size={9} strokeWidth={3} />
          </button>
          <button aria-label="最大化">
            <Icon size={8}>
              <rect x="2" y="2" width="12" height="12" stroke="#222" strokeWidth="3" />
            </Icon>
          </button>
          <button aria-label="关闭">
            <X size={11} />
          </button>
        </WindowControls>
      </TitleBar>
      <MenuBar>
        <Menus>
          {menus.map(([label, key]) => (
            <button key={key}>
              {label}
              <small>
                (<u>{key}</u>)
              </small>
            </button>
          ))}
        </Menus>
        <Divider $after={12} />
        <ToolRow $gap={10}>
          <button aria-label="挂起">
            <Pause />
          </button>
          <Caret />
        </ToolRow>
        <Divider />
        <ToolButton aria-label="发送">
          <Device />
        </ToolButton>
        <Divider />
        <ToolRow $gap={10}>
          <ToolButton aria-label="拍摄快照">
            <ClockIcon kind="add" />
          </ToolButton>
          <ToolButton aria-label="恢复快照">
            <ClockIcon kind="back" />
          </ToolButton>
          <ToolButton aria-label="管理快照">
            <ClockIcon kind="manage" />
          </ToolButton>
        </ToolRow>
        <Divider $after={7} />
        <ToolRow $gap={9}>
          <ToolButton $pressed aria-label="显示库">
            <PaneIcon side="left" />
          </ToolButton>
          <ToolButton aria-label="缩略图栏">
            <PaneIcon />
          </ToolButton>
          <ToolButton aria-label="全屏">
            <FullIcon />
          </ToolButton>
          <ToolButton aria-label="Unity">
            <UnityIcon />
          </ToolButton>
        </ToolRow>
        <Divider $after={7} />
        <ToolButton $pressed aria-label="控制台">
          <ConsoleIcon />
        </ToolButton>
        <Divider $before={7} />
        <ToolRow $gap={7}>
          <ToolButton aria-label="拉伸">
            <StretchIcon />
          </ToolButton>
          <Caret />
        </ToolRow>
      </MenuBar>
      <Workspace>
        <LibraryPane />
        <Guest>
          <GuestTabs>
            {guestTabs.map((tab) => (
              <GuestTab key={tab.label} $width={tab.width} $active={tab.active}>
                {tab.home ? <MiniHome /> : <VmIcon running={tab.active} />}
                {tab.label}
                <button aria-label="关闭标签">
                  <X size={12} strokeWidth={1.5} color="#aaa" />
                </button>
              </GuestTab>
            ))}
          </GuestTabs>
          <BrowserTabs>
            <StripButton aria-label="已搁置的标签页">
              <TabsAside />
            </StripButton>
            <StripButton aria-label="搁置标签页">
              <SetAside />
            </StripButton>
            <BrowserTab>
              <PageIcon />
              Huawei FW1
              <button aria-label="关闭">
                <X size={13} strokeWidth={1.5} color="#555" />
              </button>
            </BrowserTab>
            <StripButton $width={28} aria-label="新建标签页">
              <Plus size={16} strokeWidth={1.8} />
            </StripButton>
            <StripButton aria-label="标签页预览">
              <ChevronDown size={17} strokeWidth={1.5} />
            </StripButton>
            <WindowControls $gap={9} $size={30}>
              <StripButton aria-label="最小化">
                <Minus size={13} strokeWidth={1.5} />
              </StripButton>
              <StripButton aria-label="还原">
                <Icon size={10}>
                  <path d="M4 4V1h11v10h-3M1 4.500h10.500V15H1z" stroke="#111" strokeWidth="2" />
                </Icon>
              </StripButton>
              <StripButton aria-label="关闭">
                <X size={14} strokeWidth={1.5} />
              </StripButton>
            </WindowControls>
          </BrowserTabs>
          <AddressBar>
            <NavButton $width={34} aria-label="后退">
              <ArrowLeft size={17} strokeWidth={1.5} />
            </NavButton>
            <NavButton $width={34} aria-label="前进">
              <ArrowRight size={17} strokeWidth={1.5} color="#aaa" />
            </NavButton>
            <NavButton $width={34} aria-label="刷新">
              <Reload />
            </NavButton>
            <NavButton $width={34} aria-label="主页">
              <Home size={15} strokeWidth={1.7} />
            </NavButton>
            <AddressField>
              <CertError>
                <Warning />
                证书错误
              </CertError>
              <Url href="#">
                https://<b>192.168.10.1</b>:8443/default.html#
              </Url>
              <NavButton $width={30} aria-label="阅读视图">
                <BookOpen size={15} strokeWidth={1.5} color="#c4c4c4" />
              </NavButton>
              <NavButton $width={24} aria-label="收藏">
                <Star size={14} strokeWidth={1.8} color="#222" />
              </NavButton>
            </AddressField>
            <ToolRow $gap={10}>
              <NavButton $width={24} aria-label="收藏夹">
                <FavList />
              </NavButton>
              <NavButton $width={24} aria-label="添加备注">
                <Pen />
              </NavButton>
              <NavButton $width={24} aria-label="共享">
                <Share />
              </NavButton>
              <NavButton $width={24} aria-label="更多">
                <Icon size={14}>
                  <path d="M1 8h2M7 8h2M13 8h2" stroke="#222" strokeWidth="2" />
                </Icon>
              </NavButton>
            </ToolRow>
          </AddressBar>
          <Site>
            <SiteHeader>
              <Brand>
                <LogoBox>
                  <HuaweiFlower />
                  HUAWEI
                </LogoBox>
                <BrandName>
                  <strong>Huawei</strong>
                  USG6000V1-ENSP
                </BrandName>
              </Brand>
              <SiteNav>
                {siteNav.map(([art, label]) => (
                  <SiteNavItem key={art} href="#" $active={art === "policy"}>
                    <Icon size={22} box={24}>
                      {navArt[art]}
                    </Icon>
                    {label}
                  </SiteNavItem>
                ))}
              </SiteNav>
              <UserBar>
                当前用户：<em>admin</em>
                <UserLinks>
                  {["提交", "保存", "帮助", "关于", "修改密码", "注销"].map((label) => (
                    <a key={label} href="#">
                      {label}
                    </a>
                  ))}
                </UserLinks>
              </UserBar>
            </SiteHeader>
            <SiteBody>
              <Sidebar />
              <Content>
                <PageTabs>
                  <PageTab $active>NAT策略</PageTab>
                  <PageTab>源转换地址池</PageTab>
                  <PageTab>目的转换地址池</PageTab>
                </PageTabs>
                <PolicyPanel />
                <ConsoleRow>
                  <ConsoleTab>CLI 控制台</ConsoleTab>
                </ConsoleRow>
              </Content>
            </SiteBody>
            <SiteFooter>版权所有 © 华为技术有限公司2014-2018 。保留一切权利。</SiteFooter>
          </Site>
          <GuestTaskbar />
        </Guest>
      </Workspace>
      <Watermark>
        <strong>激活 Windows</strong>
        转到“设置”以激活 Windows。
      </Watermark>
    </Screen>
  );
}
